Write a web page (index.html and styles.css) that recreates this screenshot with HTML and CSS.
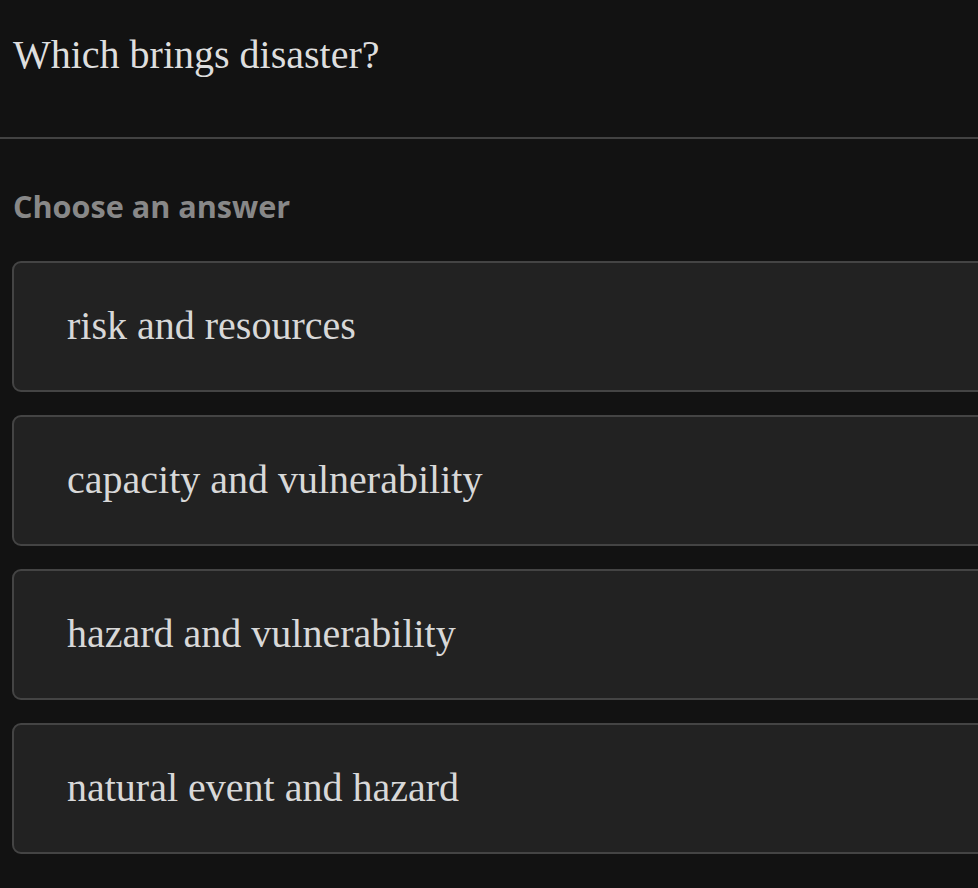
FILE: index.html
```html
<!DOCTYPE html>
<html lang="en">
<head>
<meta charset="utf-8">
<title>Quiz</title>
<link rel="stylesheet" href="styles.css">
</head>
<body>
<div class="page">
  <header class="question">
    <h1 class="question-text">Which brings disaster?</h1>
  </header>
  <section class="answers">
    <h2 class="answers-label">Choose an answer</h2>
    <div class="options">
      <button class="option">risk and resources</button>
      <button class="option">capacity and vulnerability</button>
      <button class="option">hazard and vulnerability</button>
      <button class="option">natural event and hazard</button>
    </div>
  </section>
</div>
</body>
</html>
```
FILE: styles.css
```css
html, body {
  margin: 0;
  padding: 0;
  background: #121212;
  overflow: hidden;
}
.page {
  width: 978px;
}
.question {
  border-bottom: 2px solid #424242;
  padding: 29px 13px 0 13px;
  height: 108px;
  box-sizing: content-box;
}
.question-text {
  margin: 0;
  font-family: "Liberation Serif", "Times New Roman", serif;
  font-weight: 400;
  font-size: 40px;
  line-height: 52px;
  color: #dedede;
}
.answers {
  padding: 47px 0 0 12px;
}
.answers-label {
  margin: 0 0 0 1px;
  font-family: "Open Sans", "Noto Sans", sans-serif;
  font-weight: 700;
  font-size: 30.6px;
  line-height: 40px;
  color: #888888;
}
.options {
  margin-top: 35px;
  display: flex;
  flex-direction: column;
  gap: 23px;
  width: 1000px;
}
.option {
  display: block;
  text-align: left;
  height: 131px;
  box-sizing: border-box;
  border: 2px solid #444444;
  border-radius: 9px;
  background: #222222;
  padding: 0 0 2px 53px;
  font-family: "Liberation Serif", "Times New Roman", serif;
  font-size: 40px;
  color: #d8d8d8;
}
```
